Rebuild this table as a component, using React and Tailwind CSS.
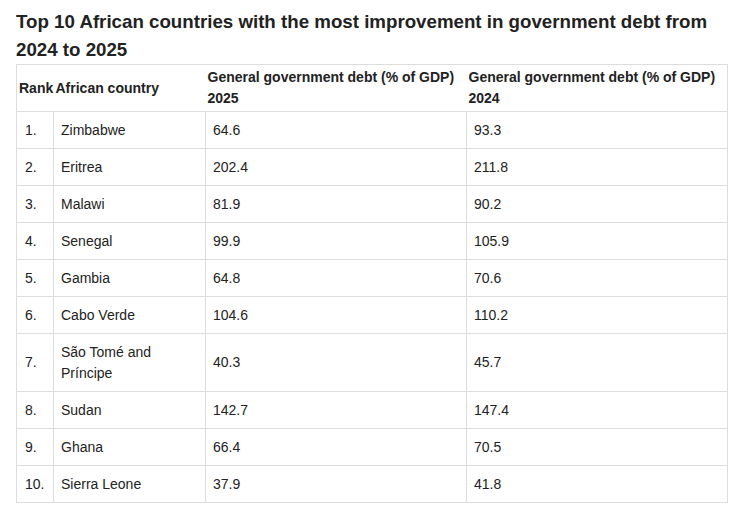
import React from 'react';

const rows = [
    ["1.", "Zimbabwe", "64.6", "93.3"],
    ["2.", "Eritrea", "202.4", "211.8"],
    ["3.", "Malawi", "81.9", "90.2"],
    ["4.", "Senegal", "99.9", "105.9"],
    ["5.", "Gambia", "64.8", "70.6"],
    ["6.", "Cabo Verde", "104.6", "110.2"],
    ["7.", "São Tomé and Príncipe", "40.3", "45.7"],
    ["8.", "Sudan", "142.7", "147.4"],
    ["9.", "Ghana", "66.4", "70.5"],
    ["10.", "Sierra Leone", "37.9", "41.8"],
];

function App() {
    return (
        <div className="bg-white min-h-[518px] px-4 pt-[8px] text-[#222] font-['Liberation_Sans',Arial,sans-serif]">
            <h2 className="text-[18.72px] leading-[28px] font-bold">
                Top 10 African countries with the most improvement in government debt from 2024 to 2025
            </h2>
            <table className="table-fixed border-collapse w-[711px] border border-[#ddd]">
                <colgroup>
                    <col className="w-[37px]" />
                    <col className="w-[152px]" />
                    <col className="w-[261px]" />
                    <col className="w-[261px]" />
                </colgroup>
                <thead>
                    <tr className="text-left text-[14px] leading-[21px] font-bold">
                        <th className="border-b border-[#ddd] px-[2px] py-[2px]">Rank</th>
                        <th className="border-b border-[#ddd] px-[2px] py-[2px]">African country</th>
                        <th className="border-b border-[#ddd] px-[2px] py-[2px]">General government debt (% of GDP) 2025</th>
                        <th className="border-b border-[#ddd] px-[2px] py-[2px]">General government debt (% of GDP) 2024</th>
                    </tr>
                </thead>
                <tbody>
                    {rows.map((r) => (
                        <tr key={r[0]} className="text-[14px] leading-[21px]">
                            <td className="border border-[#ddd] px-[8px] py-[7.5px]">{r[0]}</td>
                            <td className="border border-[#ddd] px-[7px] py-[7.5px]">{r[1]}</td>
                            <td className="border border-[#ddd] px-[7px] py-[7.5px]">{r[2]}</td>
                            <td className="border border-[#ddd] px-[7px] py-[7.5px]">{r[3]}</td>
                        </tr>
                    ))}
                </tbody>
            </table>
        </div>
    );
}

export default App;
